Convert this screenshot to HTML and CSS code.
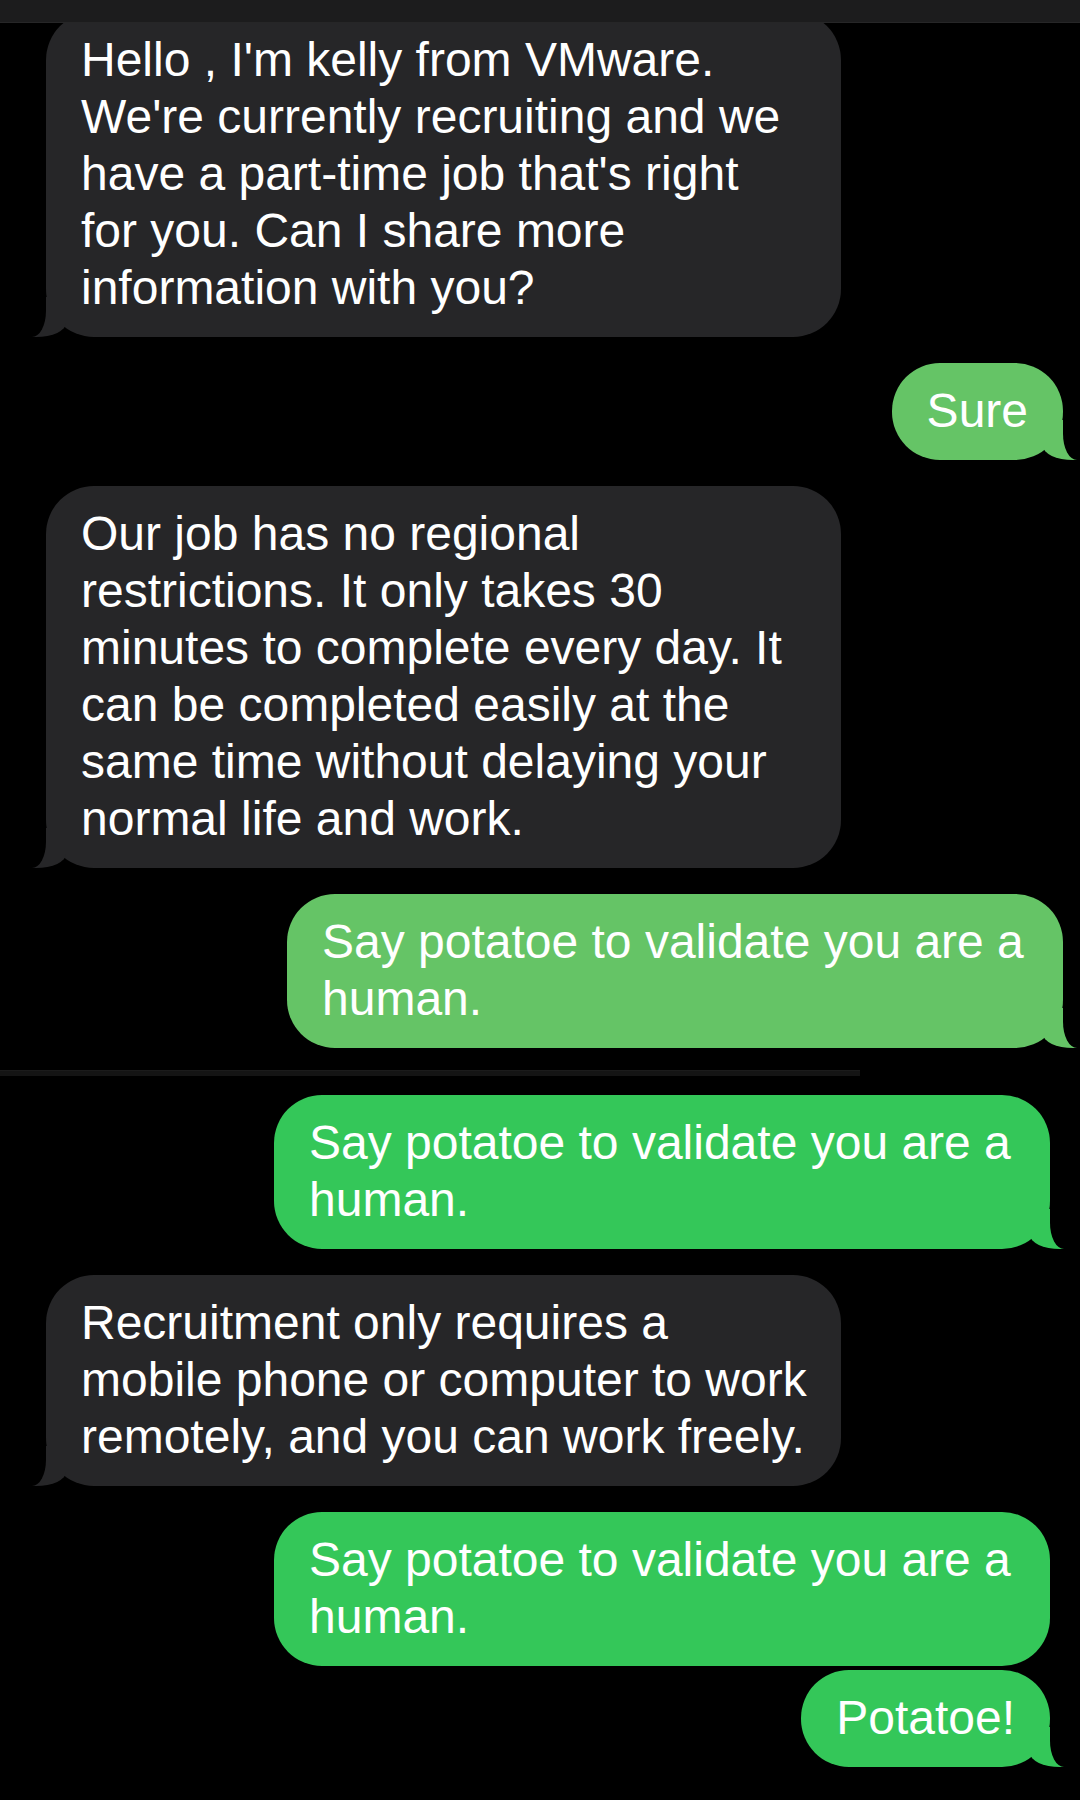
FILE: index.html
```html
<!DOCTYPE html>
<html lang="en">
<head>
  <meta charset="UTF-8" />
  <meta name="viewport" content="width=device-width, initial-scale=1.0"/>
  <title>Messages</title>
  <link rel="stylesheet" href="styles.css">
</head>
<body>

  <div class="topbar"></div>

  <div class="thread">

    <!-- first screenshot -->
    <div class="shot upper">
      <div class="bubble in">Hello , I'm kelly from VMware.<br>We're currently recruiting and we<br>have a part-time job that's right<br>for you. Can I share more<br>information with you?</div>
      <div class="bubble out">Sure</div>
      <div class="bubble in">Our job has no regional<br>restrictions. It only takes 30<br>minutes to complete every day. It<br>can be completed easily at the<br>same time without delaying your<br>normal life and work.</div>
      <div class="bubble out long">Say potatoe to validate you are a<br>human.</div>
    </div>

    <div class="seam"></div>

    <!-- second screenshot -->
    <div class="shot lower">
      <div class="bubble out long">Say potatoe to validate you are a<br>human.</div>
      <div class="bubble in">Recruitment only requires a<br>mobile phone or computer to work<br>remotely, and you can work freely.</div>
      <div class="bubble out long no-tail">Say potatoe to validate you are a<br>human.</div>
      <div class="bubble out next">Potatoe!</div>
    </div>

  </div>

</body>
</html>
```

FILE: styles.css
```css
:root {
  --bg-color: #000;
  --bar-color: #1c1c1d;
  --gray-bubble: #262628;
  --green-old: #65c466;
  --green-new: #34c759;
  --text-color: #fff;
}

body {
  margin: 0;
  background-color: var(--bg-color);
  color: var(--text-color);
  font-family: "Liberation Sans", Arial, sans-serif;
  overflow-x: hidden;
}

.topbar {
  position: absolute;
  top: 0;
  left: 0;
  right: 0;
  height: 22px;
  background-color: var(--bar-color);
  border-bottom: 1px solid #262627;
  z-index: 5;
}

.thread {
  display: flex;
  flex-direction: column;
}

.shot {
  display: flex;
  flex-direction: column;
  gap: 26px;
}

.shot.upper {
  padding: 12px 17px 0 46px;
  --green: var(--green-old);
}

.shot.lower {
  padding: 0 30px 0 46px;
  --green: var(--green-new);
}

.seam {
  width: 860px;
  height: 5px;
  margin: 22px 0 19px;
  background-color: #141414;
  border-top: 1px solid #1b1b1b;
}

.bubble {
  position: relative;
  box-sizing: border-box;
  padding: 19px 35px 21px;
  border-radius: 48px;
  font-size: 48px;
  line-height: 57px;
  white-space: nowrap;
}

.bubble.in {
  align-self: flex-start;
  width: 795px;
  background-color: var(--gray-bubble);
}

.bubble.out {
  align-self: flex-end;
  background-color: var(--green);
}

.bubble.out.long {
  width: 776px;
}

.bubble.next {
  margin-top: -22px;
}

/* tails */
.bubble::before,
.bubble::after {
  content: "";
  position: absolute;
  bottom: 0;
  height: 40px;
}

.bubble.out::before {
  right: -14px;
  width: 34px;
  background-color: var(--green);
  border-bottom-left-radius: 30px 14px;
}

.bubble.out::after {
  right: -20px;
  width: 20px;
  background-color: var(--bg-color);
  border-bottom-left-radius: 14px 26px;
}

.bubble.in::before {
  left: -14px;
  width: 34px;
  background-color: var(--gray-bubble);
  border-bottom-right-radius: 30px 14px;
}

.bubble.in::after {
  left: -20px;
  width: 20px;
  background-color: var(--bg-color);
  border-bottom-right-radius: 14px 26px;
}

.bubble.no-tail::before,
.bubble.no-tail::after {
  display: none;
}
```
